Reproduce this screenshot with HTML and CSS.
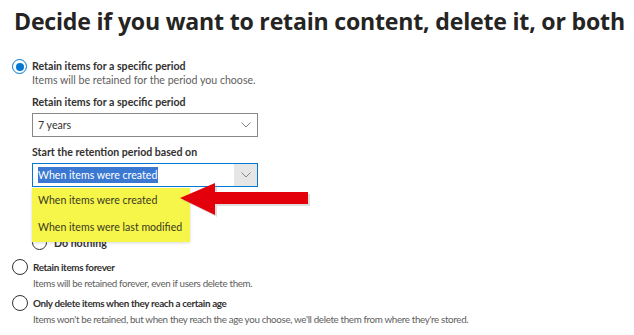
FILE: index.html
```html
<!DOCTYPE html>
<html>
<head>
<meta charset="utf-8">
<link rel="stylesheet" href="styles.css">
</head>
<body>
<div class="page">
  <h1 class="title">Decide if you want to retain content, delete it, or both</h1>
  <div class="options">
    <div class="option">
      <span class="radio checked"></span>
      <div class="option-body">
        <div class="option-label">Retain items for a specific period</div>
        <div class="option-desc">Items will be retained for the period you choose.</div>
        <div class="field">
          <div class="field-label">Retain items for a specific period</div>
          <div class="select">
            <span class="select-text">7 years</span>
            <span class="chev"><svg width="10" height="6" viewBox="0 0 10 6"><path d="M0.5 0.5 L5 5 L9.5 0.5" fill="none" stroke="#8a8886" stroke-width="1"/></svg></span>
          </div>
        </div>
        <div class="field">
          <div class="field-label">Start the retention period based on</div>
          <div class="select focused">
            <span class="select-text"><span class="sel">When items were created</span></span>
            <span class="chev grey"><svg width="10" height="6" viewBox="0 0 10 6"><path d="M0.5 0.5 L5 5 L9.5 0.5" fill="none" stroke="#8a8886" stroke-width="1"/></svg></span>
            <div class="menu">
              <div class="menu-item">When items were created</div>
              <div class="menu-item">When items were last modified</div>
            </div>
          </div>
        </div>
        <div class="option sub">
          <span class="radio"></span>
          <div class="option-label">Do nothing</div>
        </div>
      </div>
    </div>
    <div class="option lower">
      <span class="radio"></span>
      <div class="option-body">
        <div class="option-label">Retain items forever</div>
        <div class="option-desc">Items will be retained forever, even if users delete them.</div>
      </div>
    </div>
    <div class="option lower">
      <span class="radio"></span>
      <div class="option-body">
        <div class="option-label">Only delete items when they reach a certain age</div>
        <div class="option-desc">Items won't be retained, but when they reach the age you choose, we'll delete them from where they're stored.</div>
      </div>
    </div>
  </div>
  <svg class="arrow" width="136" height="40" viewBox="0 0 136 40">
    <polygon points="2,17 37,2 37,11 130,11 130,23 37,23 37,34" fill="#a0a0a0" opacity="0.35" transform="translate(2,2)"/>
    <polygon points="2,17 37,2 37,11 130,11 130,23 37,23 37,34" fill="#e4000b"/>
  </svg>
</div>
</body>
</html>
```
FILE: styles.css
```css
html, body {
  margin: 0;
  padding: 0;
  background: #ffffff;
}
body {
  font-family: "Lato", "Noto Sans", sans-serif;
  color: #323130;
}
.page {
  position: relative;
  width: 634px;
  height: 335px;
  overflow: hidden;
}
.title {
  margin: 0;
  padding: 6px 0 0 14px;
  font-family: "Open Sans", "Noto Sans", sans-serif;
  font-size: 23.1px;
  line-height: 30px;
  font-weight: 700;
  color: #252423;
  letter-spacing: -0.2px;
  white-space: nowrap;
}
.options {
  padding: 23px 0 0 12px;
  display: flex;
  flex-direction: column;
  gap: 8px;
}
.option {
  display: flex;
  align-items: flex-start;
  gap: 5px;
}
.radio {
  flex: none;
  width: 13px;
  height: 13px;
  border: 1px solid #323130;
  border-radius: 50%;
  box-sizing: content-box;
  position: relative;
  background: #fff;
}
.radio.checked {
  border-color: #0078d4;
}
.radio.checked::after {
  content: "";
  position: absolute;
  left: 2.5px;
  top: 2.5px;
  width: 8px;
  height: 8px;
  border-radius: 50%;
  background: #0078d4;
}
.option-body {
  display: flex;
  flex-direction: column;
}
.option-label {
  font-size: 10.6px;
  line-height: 14px;
  font-weight: 700;
  color: #323130;
  white-space: nowrap;
}
.option-desc {
  font-size: 10.6px;
  line-height: 14px;
  color: #605e5c;
  white-space: nowrap;
}
.field {
  margin-top: 8px;
  display: flex;
  flex-direction: column;
  gap: 4px;
}
.field-label {
  font-size: 10.6px;
  line-height: 14px;
  font-weight: 700;
  color: #323130;
}
.select {
  position: relative;
  width: 226px;
  height: 24px;
  box-sizing: border-box;
  border: 1px solid #8a8886;
  display: flex;
  align-items: center;
  justify-content: space-between;
  background: #fff;
}
.select.focused {
  border-color: #0078d4;
}
.select-text {
  padding-left: 5px;
  font-size: 10.6px;
  line-height: 16px;
  color: #323130;
}
.sel {
  background: #3a78d2;
  color: #ffffff;
  padding: 2px 1px 2px 0;
}
.chev {
  width: 23px;
  height: 22px;
  display: flex;
  align-items: center;
  justify-content: center;
}
.chev.grey {
  background: #e6e6e6;
}
.menu {
  position: absolute;
  left: -1px;
  top: 24px;
  width: 158px;
  height: 54px;
  background: #f6f64a;
  box-shadow: 0 1px 3px rgba(0,0,0,0.15);
  display: flex;
  flex-direction: column;
  z-index: 3;
}
.menu-item {
  height: 27px;
  line-height: 24px;
  padding-left: 6px;
  font-size: 10.6px;
  color: #3a3a22;
  white-space: nowrap;
}
.option.sub {
  margin-top: 48px;
  gap: 7px;
  align-items: center;
}
.option.lower {
  margin-top: 1px;
}
.option.lower .radio {
  width: 14px;
  height: 14px;
}
.option.lower .option-label {
  font-size: 9.9px;
  line-height: 16px;
  letter-spacing: -0.35px;
}
.option.lower .option-desc {
  font-size: 9.8px;
  line-height: 16px;
  letter-spacing: -0.35px;
}
.option.lower + .option.lower {
  margin-top: -4px;
}
.arrow {
  position: absolute;
  left: 178px;
  top: 181px;
  z-index: 5;
}
```
